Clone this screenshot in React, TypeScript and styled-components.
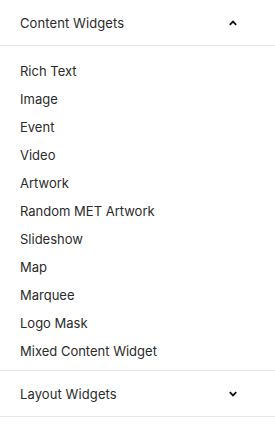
import styled, { createGlobalStyle } from "styled-components";

const GlobalStyle = createGlobalStyle`
  body {
    margin: 0;
    background: #fff;
    font-family: Inter, "Noto Sans", sans-serif;
  }
`;

const contentWidgets = [
  "Rich Text",
  "Image",
  "Event",
  "Video",
  "Artwork",
  "Random MET Artwork",
  "Slideshow",
  "Map",
  "Marquee",
  "Logo Mask",
  "Mixed Content Widget",
];

const Chevron = ({ up }: { up?: boolean }) => (
  <svg width="8" height="6" viewBox="0 0 8 6" style={{ transform: up ? "rotate(180deg)" : undefined }}>
    <path d="M0.8 1.2 L4 4.4 L7.2 1.2" fill="none" stroke="#111" strokeWidth="1.8" />
  </svg>
);

export default function App() {
  return (
    <>
      <GlobalStyle />
      <Panel>
        <Section>
          <Header>
            <Title>Content Widgets</Title>
            <Chevron up />
          </Header>
          <List>
            {contentWidgets.map((w) => (
              <Item key={w}>{w}</Item>
            ))}
          </List>
        </Section>
        <Section>
          <Header>
            <Title>Layout Widgets</Title>
            <Chevron />
          </Header>
        </Section>
      </Panel>
    </>
  );
}

const Panel = styled.div`
  width: 275px;
`;

const Section = styled.div`
  border-bottom: 1px solid #e6e6e6;
`;

const Header = styled.div`
  display: flex;
  align-items: center;
  justify-content: space-between;
  height: 45px;
  padding: 0 38px 0 20px;
  cursor: pointer;
`;

const Title = styled.span`
  font-size: 13px;
  letter-spacing: 0.1px;
  color: #2b2b2b;
`;

const List = styled.div`
  border-top: 1px solid #e6e6e6;
  padding: 11px 0 5px;
`;

const Item = styled.div`
  height: 28px;
  line-height: 28px;
  padding-left: 20px;
  font-size: 13px;
  color: #2b2b2b;
`;
